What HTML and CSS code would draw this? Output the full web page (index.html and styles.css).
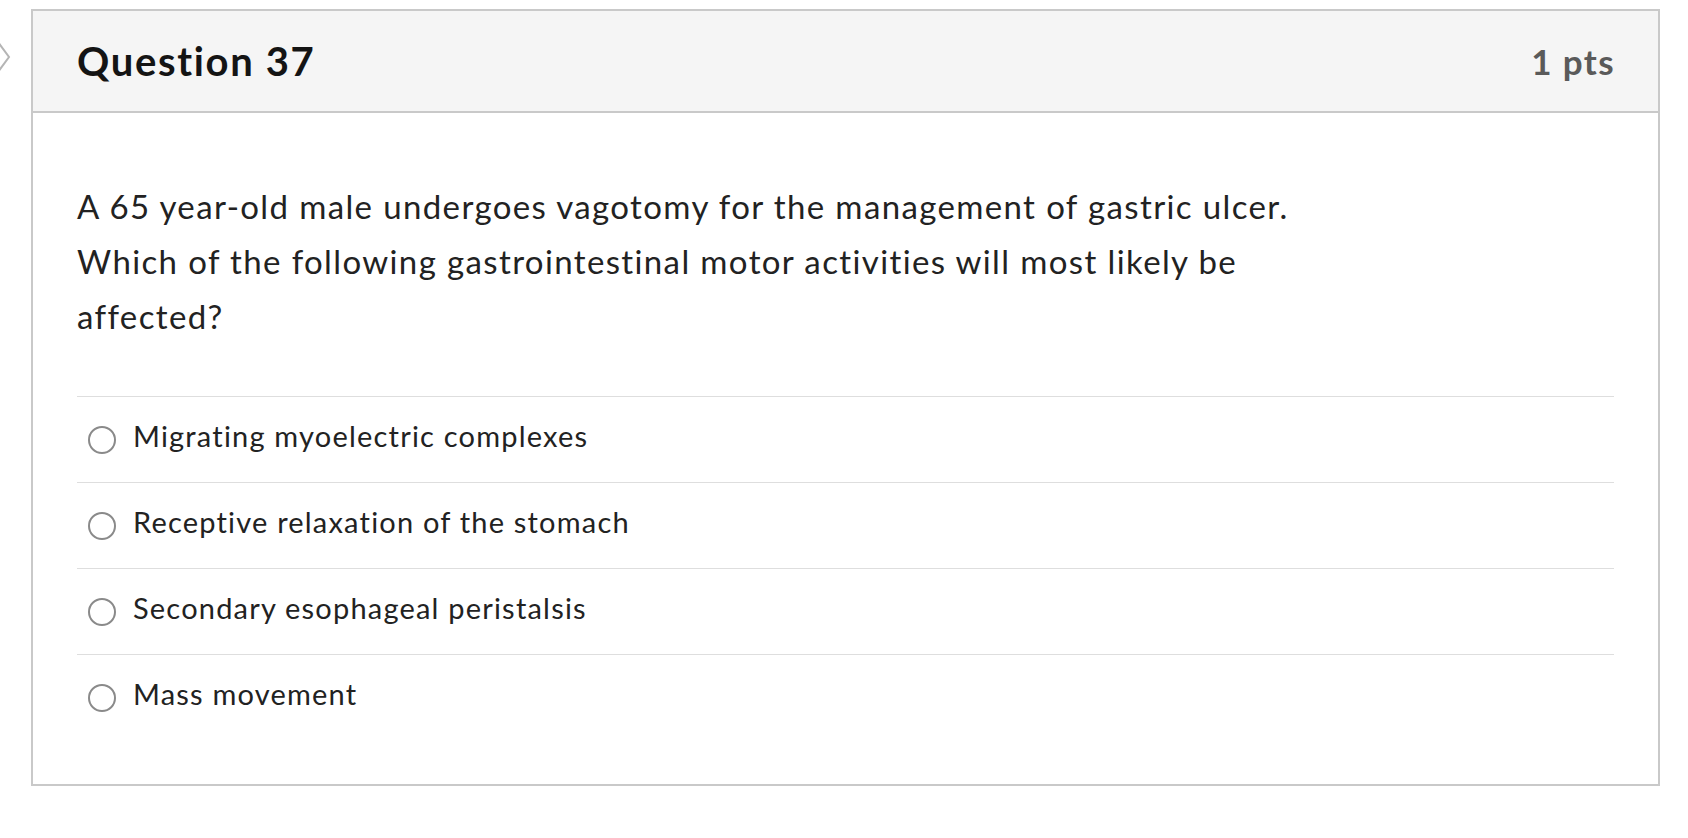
FILE: index.html
```html
<!DOCTYPE html>
<html lang="en">
<head>
<meta charset="utf-8">
<title>Question 37</title>
<link rel="stylesheet" href="styles.css">
</head>
<body>
<div class="page">
  <svg class="flag" width="12" height="40" viewBox="0 0 12 40" aria-hidden="true">
    <polyline points="-2,2 9,17 -2,32" fill="none" stroke="#b5b5b5" stroke-width="2"/>
  </svg>
  <div class="card">
    <div class="card-header">
      <h2 class="q-title">Question 37</h2>
      <span class="q-pts">1 pts</span>
    </div>
    <div class="card-body">
      <p class="q-text">A 65 year-old male undergoes vagotomy for the management of gastric ulcer.<br>Which of the following gastrointestinal motor activities will most likely be<br>affected?</p>
      <div class="answers">
        <label class="answer"><span class="radio"></span><span class="answer-text">Migrating myoelectric complexes</span></label>
        <label class="answer"><span class="radio"></span><span class="answer-text">Receptive relaxation of the stomach</span></label>
        <label class="answer"><span class="radio"></span><span class="answer-text">Secondary esophageal peristalsis</span></label>
        <label class="answer"><span class="radio"></span><span class="answer-text">Mass movement</span></label>
      </div>
    </div>
  </div>
</div>
</body>
</html>
```

FILE: styles.css
```css
html, body {
  margin: 0;
  padding: 0;
  background: #ffffff;
}
body {
  font-family: Lato, "Open Sans", "Liberation Sans", sans-serif;
  color: #262626;
}
.page {
  position: relative;
  padding: 9px 28px 0 31px;
}
.flag {
  position: absolute;
  left: 0;
  top: 40px;
}
.card {
  width: 1629px;
  box-sizing: border-box;
  border: 2px solid #c9c9c9;
  background: #fff;
}
.card-header {
  display: flex;
  align-items: center;
  justify-content: space-between;
  height: 102px;
  box-sizing: border-box;
  padding: 0 44px 0 44px;
  background: #f5f5f5;
  border-bottom: 2px solid #c9c9c9;
}
.q-title {
  margin: 0;
  font-size: 40px;
  font-weight: 700;
  letter-spacing: 1.65px;
  color: #141414;
}
.q-pts {
  font-size: 35px;
  font-weight: 700;
  letter-spacing: 1.4px;
  color: #5a5a5a;
  margin-right: -1px;
}
.card-body {
  padding: 66px 44px 44px 44px;
}
.q-text {
  margin: 0 0 52px 0;
  font-size: 33px;
  line-height: 55px;
  letter-spacing: 1.37px;
  color: #222222;
}
.answers {
  display: flex;
  flex-direction: column;
}
.answer {
  display: flex;
  align-items: center;
  gap: 17px;
  height: 86px;
  box-sizing: border-box;
  padding-left: 11px;
  border-top: 1px solid #dedede;
  font-size: 29px;
  letter-spacing: 1.2px;
  color: #222222;
}
.answer-text {
  margin-bottom: 8px;
}
.radio {
  width: 24px;
  height: 24px;
  border: 2px solid #8a8a8a;
  border-radius: 50%;
  flex: none;
  background: #fff;
}
```
